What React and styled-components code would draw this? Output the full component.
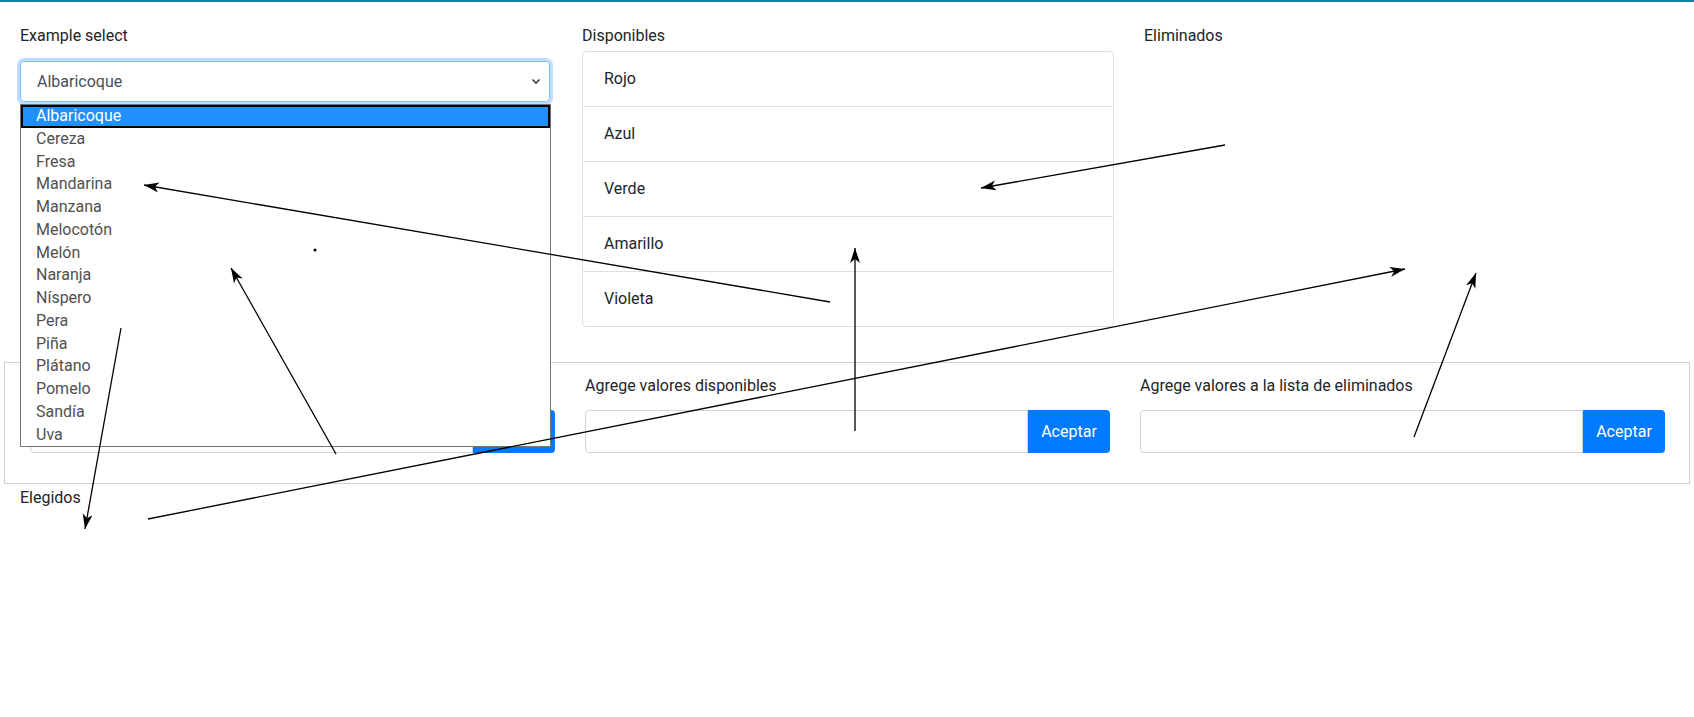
import styled, { createGlobalStyle } from "styled-components";

const GlobalStyle = createGlobalStyle`
    html, body { margin: 0; padding: 0; background: #fff; }
    body { font-family: Roboto, "Liberation Sans", sans-serif; color: #212529; }
    * { box-sizing: border-box; }
`

const Page = styled.div`
    position: relative;
    width: 1694px; min-height: 717px;
    border-top: 2px solid #17809f;
`

const TopRow = styled.div`
    display: grid; grid-template-columns: repeat(3, 531px); column-gap: 31px;
    padding: 22px 19px 0 20px;
`

const Column = styled.div`
    display: flex; flex-direction: column;
    position: relative;
`

const Label = styled.div`
    font-size: 16px; line-height: 24px; min-height: 24px; color: #212529;
    margin-bottom: ${props => props.$space || 0}px;
`

const SelectBox = styled.div`
    position: relative;
    height: 41px; width: 530px;
    display: flex; align-items: center; justify-content: space-between;
    padding: 0 8px 0 16px;
    border: 1px solid #80bdff; border-radius: 4px;
    box-shadow: 0 0 0 3px rgba(0,123,255,0.25);
    font-size: 16px; color: #495057;
`

const Dropdown = styled.ul`
    position: absolute; z-index: 5;
    top: 80px; left: 0;
    width: 531px; margin: 0; padding: 0;
    list-style: none;
    background: #fff; border: 1px solid #767676;
`

const Option = styled.li`
    height: 22.75px; line-height: 22.75px;
    padding-left: 15px;
    font-size: 16px;
    color: ${props => props.$selected ? '#fff' : '#505050'};
    background: ${props => props.$selected ? '#1e90ff' : 'transparent'};
    box-shadow: ${props => props.$selected ? 'inset 0 0 0 2px #000' : 'none'};
`

const ListGroup = styled.div`
    border: 1px solid #dfdfdf; border-radius: 4px;
    width: 532px;
`

const ListItem = styled.div`
    padding: 15px 21px;
    line-height: 24px; font-size: 16px; color: #212529;
    & + & { border-top: 1px solid #dfdfdf; }
`

const FormBox = styled.div`
    margin: 35px 4px 0 4px;
    border: 1px solid #d0d0d0;
    padding: 11px 24px 30px 25px;
    display: grid; grid-template-columns: repeat(3, 525px); column-gap: 30px;
`

const InputGroup = styled.div`
    display: flex; height: 43px;
`

const TextInput = styled.input`
    flex: 1; min-width: 0;
    border: 1px solid #ced4da; border-radius: 4px 0 0 4px;
    font-size: 16px; padding: 0 12px;
    outline: none;
`

const AcceptButton = styled.button`
    width: 82px; border: none;
    border-radius: 0 4px 4px 0;
    background: #007bff; color: #fff;
    font-family: Roboto, "Liberation Sans", sans-serif;
    font-size: 16px;
`

const Chosen = styled.div`
    padding: 2px 20px 0 20px;
`

const Arrows = styled.svg`
    position: absolute; top: 0; left: 0; z-index: 10;
    pointer-events: none;
`

const fruits = ["Albaricoque", "Cereza", "Fresa", "Mandarina", "Manzana", "Melocotón", "Melón", "Naranja", "Níspero", "Pera", "Piña", "Plátano", "Pomelo", "Sandía", "Uva"]
const colors = ["Rojo", "Azul", "Verde", "Amarillo", "Violeta"]

const arrows = [
    [830, 300, 144, 183],
    [1225, 143, 981, 186],
    [855, 429, 855, 246],
    [148, 517, 1405, 267],
    [1414, 435, 1476, 271],
    [336, 452, 231, 266],
    [121, 326, 85, 527],
]

function AddField({ title }) {
    return (
        <div>
            <Label $space={12}>{title}</Label>
            <InputGroup>
                <TextInput />
                <AcceptButton>Aceptar</AcceptButton>
            </InputGroup>
        </div>
    )
}

function App() {
    return (
        <Page>
            <GlobalStyle />
            <TopRow>
                <Column>
                    <Label $space={13}>Example select</Label>
                    <SelectBox>
                        Albaricoque
                        <svg width="10" height="7" viewBox="0 0 10 7">
                            <polyline points="1.5,1.5 5,5 8.5,1.5" fill="none" stroke="#444" strokeWidth="1.6" />
                        </svg>
                    </SelectBox>
                    <Dropdown>
                        {fruits.map((f, i) => <Option key={f} $selected={i === 0}>{f}</Option>)}
                    </Dropdown>
                </Column>
                <Column>
                    <Label $space={3}>Disponibles</Label>
                    <ListGroup>
                        {colors.map(c => <ListItem key={c}>{c}</ListItem>)}
                    </ListGroup>
                </Column>
                <Column>
                    <Label>Eliminados</Label>
                </Column>
            </TopRow>
            <FormBox>
                <AddField title="" />
                <AddField title="Agrege valores disponibles" />
                <AddField title="Agrege valores a la lista de eliminados" />
            </FormBox>
            <Chosen>
                <Label>Elegidos</Label>
            </Chosen>
            <Arrows width="1694" height="717" viewBox="0 0 1694 717">
                <defs>
                    <marker id="head" markerUnits="userSpaceOnUse" markerWidth="16" markerHeight="12" refX="15" refY="5" orient="auto">
                        <path d="M0,0 L15,5 L0,10 L4,5 Z" fill="#000" />
                    </marker>
                </defs>
                {arrows.map(([x1, y1, x2, y2], i) => (
                    <line key={i} x1={x1} y1={y1} x2={x2} y2={y2} stroke="#000" strokeWidth="1.3" markerEnd="url(#head)" />
                ))}
                <circle cx="315" cy="248" r="1.5" fill="#000" />
            </Arrows>
        </Page>
    )
}

export default App
